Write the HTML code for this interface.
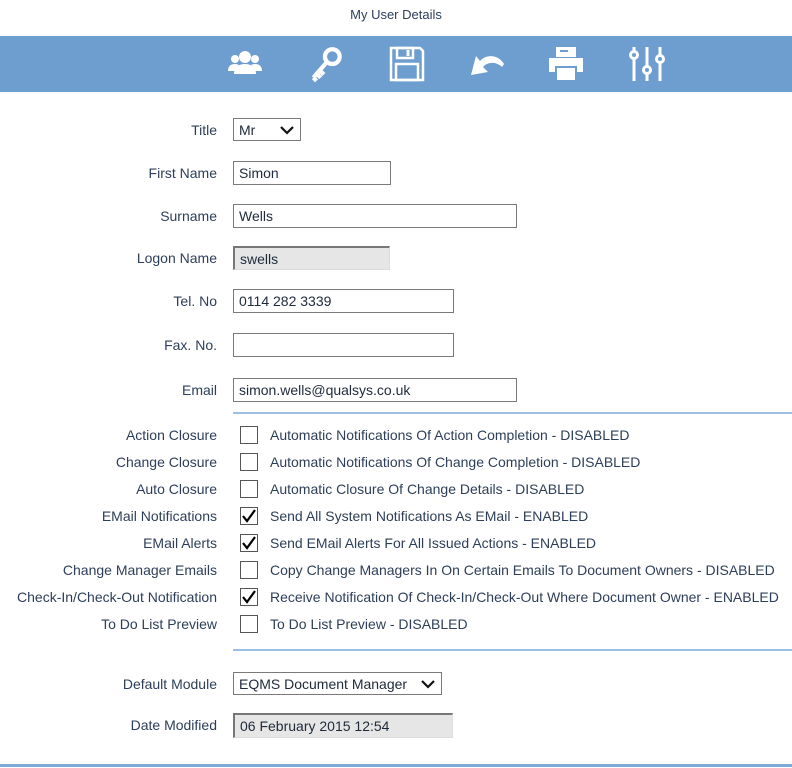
<!DOCTYPE html>
<html><head><meta charset="utf-8">
<style>
*{box-sizing:border-box;margin:0;padding:0}
body{width:792px;height:768px;background:#fff;font-family:"Liberation Sans",sans-serif;font-size:14px;color:#2d3f58;position:relative;overflow:hidden}
.abs{position:absolute}
.title{top:7px;left:0;width:792px;text-align:center;color:#2d3f58;font-size:13px}
.bar{top:36px;left:0;width:792px;height:56px;background:#6e9ecf}
.lbl{position:absolute;right:575px;text-align:right;white-space:nowrap;line-height:16px}
.inp{position:absolute;left:233px;height:24px;border:1px solid #7a7a7a;background:#fff;padding:3px 5px;line-height:16px;color:#1e2a3a;font-size:14px}
.ro{background:#e6e6e6;border-top:2px solid #777;border-left:2px solid #777;border-right:1px solid #ddd;border-bottom:1px solid #ddd}
.sep{position:absolute;left:233px;right:0;height:2px;background:#9dbfe3}
.cb{position:absolute;left:240px;width:18px;height:18px;border:1px solid #555;background:#fff}
.ct{position:absolute;left:270px;white-space:nowrap;line-height:16px}
.chev{position:absolute;right:6px;top:6px}
</style></head><body>
<div class="abs title">My User Details</div>
<div class="abs bar">
<svg class="abs" style="left:226px;top:10px" width="38" height="36" viewBox="0 0 36 36" fill="#fff">
<circle cx="18" cy="11" r="6"/><path d="M7 28c0-7 5-10 11-10s11 3 11 10z"/>
<circle cx="8" cy="13" r="4"/><path d="M1 25c0-5 3-7 7-7 2 0 3 .5 4 1-3 2-4 4-4 6z"/>
<circle cx="28" cy="13" r="4"/><path d="M35 25c0-5-3-7-7-7-2 0-3 .5-4 1 3 2 4 4 4 6z"/></svg>
<svg class="abs" style="left:306px;top:8px" width="40" height="40" viewBox="0 0 38 38" fill="none" stroke="#fff" stroke-width="4">
<circle cx="25" cy="12" r="7"/><path d="M20 17L7 32M10 28l4 4M13 25l4 4M7 32l3 3"/></svg>
<svg class="abs" style="left:389px;top:10px" width="36" height="36" viewBox="0 0 36 36" fill="none" stroke="#fff" stroke-width="2.5">
<path d="M2 2h29l3 3v29H2z"/><rect x="8" y="2" width="16" height="10"/><rect x="7" y="18" width="22" height="16"/><path d="M19 4v6" stroke-width="3"/></svg>
<svg class="abs" style="left:468px;top:14px" width="38" height="30" viewBox="0 0 38 30" fill="#fff">
<path d="M36 14C30 4 18 4 12 11l-4-5-5 19 17-3-5-5c4-5 13-6 19 0z"/></svg>
<svg class="abs" style="left:547px;top:10px" width="38" height="36" viewBox="0 0 38 36" fill="#fff">
<path d="M9 1h20v10H9z"/><path d="M2 12h34v14h-6v-6H8v6H2z"/><rect x="10" y="22" width="18" height="12"/>
<path d="M13 4h8v2h-8z" fill="#6e9ecf"/></svg>
<svg class="abs" style="left:628px;top:9px" width="38" height="38" viewBox="0 0 38 38" fill="none" stroke="#fff" stroke-width="3">
<path d="M6 2v4M6 14v22M19 2v19M19 29v7M32 2v8M32 18v18"/><circle cx="6" cy="10" r="3.5"/><circle cx="19" cy="25" r="3.5"/><circle cx="32" cy="14" r="3.5"/></svg>
</div>

<div class="lbl" style="top:122px">Title</div>
<div class="inp" style="top:118px;width:68px;height:23px;padding-top:3px">Mr
<svg class="chev" width="14" height="10" viewBox="0 0 14 10"><path d="M1 2l6 6 6-6" fill="none" stroke="#111" stroke-width="2.2"/></svg></div>

<div class="lbl" style="top:165px">First Name</div>
<div class="inp" style="top:161px;width:158px">Simon</div>
<div class="lbl" style="top:208px">Surname</div>
<div class="inp" style="top:204px;width:284px">Wells</div>
<div class="lbl" style="top:250px">Logon Name</div>
<div class="inp ro" style="top:246px;width:157px">swells</div>
<div class="lbl" style="top:293px">Tel. No</div>
<div class="inp" style="top:289px;width:221px">0114 282 3339</div>
<div class="lbl" style="top:337px">Fax. No.</div>
<div class="inp" style="top:333px;width:221px"></div>
<div class="lbl" style="top:382px">Email</div>
<div class="inp" style="top:378px;width:284px">simon.wells@qualsys.co.uk</div>

<div class="sep" style="top:412px"></div>

<div class="lbl" style="top:427px">Action Closure</div><div class="cb" style="top:426px"></div><div class="ct" style="top:427px">Automatic Notifications Of Action Completion - DISABLED</div>
<div class="lbl" style="top:454px">Change Closure</div><div class="cb" style="top:453px"></div><div class="ct" style="top:454px">Automatic Notifications Of Change Completion - DISABLED</div>
<div class="lbl" style="top:481px">Auto Closure</div><div class="cb" style="top:480px"></div><div class="ct" style="top:481px">Automatic Closure Of Change Details - DISABLED</div>
<div class="lbl" style="top:508px">EMail Notifications</div><div class="cb" style="top:507px"><svg width="16" height="16" viewBox="0 0 16 16"><path d="M2 8l4 5 8-11" fill="none" stroke="#000" stroke-width="2.2"/></svg></div><div class="ct" style="top:508px">Send All System Notifications As EMail - ENABLED</div>
<div class="lbl" style="top:535px">EMail Alerts</div><div class="cb" style="top:534px"><svg width="16" height="16" viewBox="0 0 16 16"><path d="M2 8l4 5 8-11" fill="none" stroke="#000" stroke-width="2.2"/></svg></div><div class="ct" style="top:535px">Send EMail Alerts For All Issued Actions - ENABLED</div>
<div class="lbl" style="top:562px">Change Manager Emails</div><div class="cb" style="top:561px"></div><div class="ct" style="top:562px">Copy Change Managers In On Certain Emails To Document Owners - DISABLED</div>
<div class="lbl" style="top:589px">Check-In/Check-Out Notification</div><div class="cb" style="top:588px"><svg width="16" height="16" viewBox="0 0 16 16"><path d="M2 8l4 5 8-11" fill="none" stroke="#000" stroke-width="2.2"/></svg></div><div class="ct" style="top:589px">Receive Notification Of Check-In/Check-Out Where Document Owner - ENABLED</div>
<div class="lbl" style="top:616px">To Do List Preview</div><div class="cb" style="top:615px"></div><div class="ct" style="top:616px">To Do List Preview - DISABLED</div>

<div class="sep" style="top:649px"></div>

<div class="lbl" style="top:676px">Default Module</div>
<div class="inp" style="top:672px;width:209px;height:23px">EQMS Document Manager
<svg class="chev" width="14" height="10" viewBox="0 0 14 10"><path d="M1 2l6 6 6-6" fill="none" stroke="#111" stroke-width="2.2"/></svg></div>
<div class="lbl" style="top:717px">Date Modified</div>
<div class="inp ro" style="top:713px;width:220px;height:25px">06 February 2015 12:54</div>

<div class="abs" style="left:0;top:764px;width:792px;height:3px;background:#7ea9d6"></div>
</body></html>
